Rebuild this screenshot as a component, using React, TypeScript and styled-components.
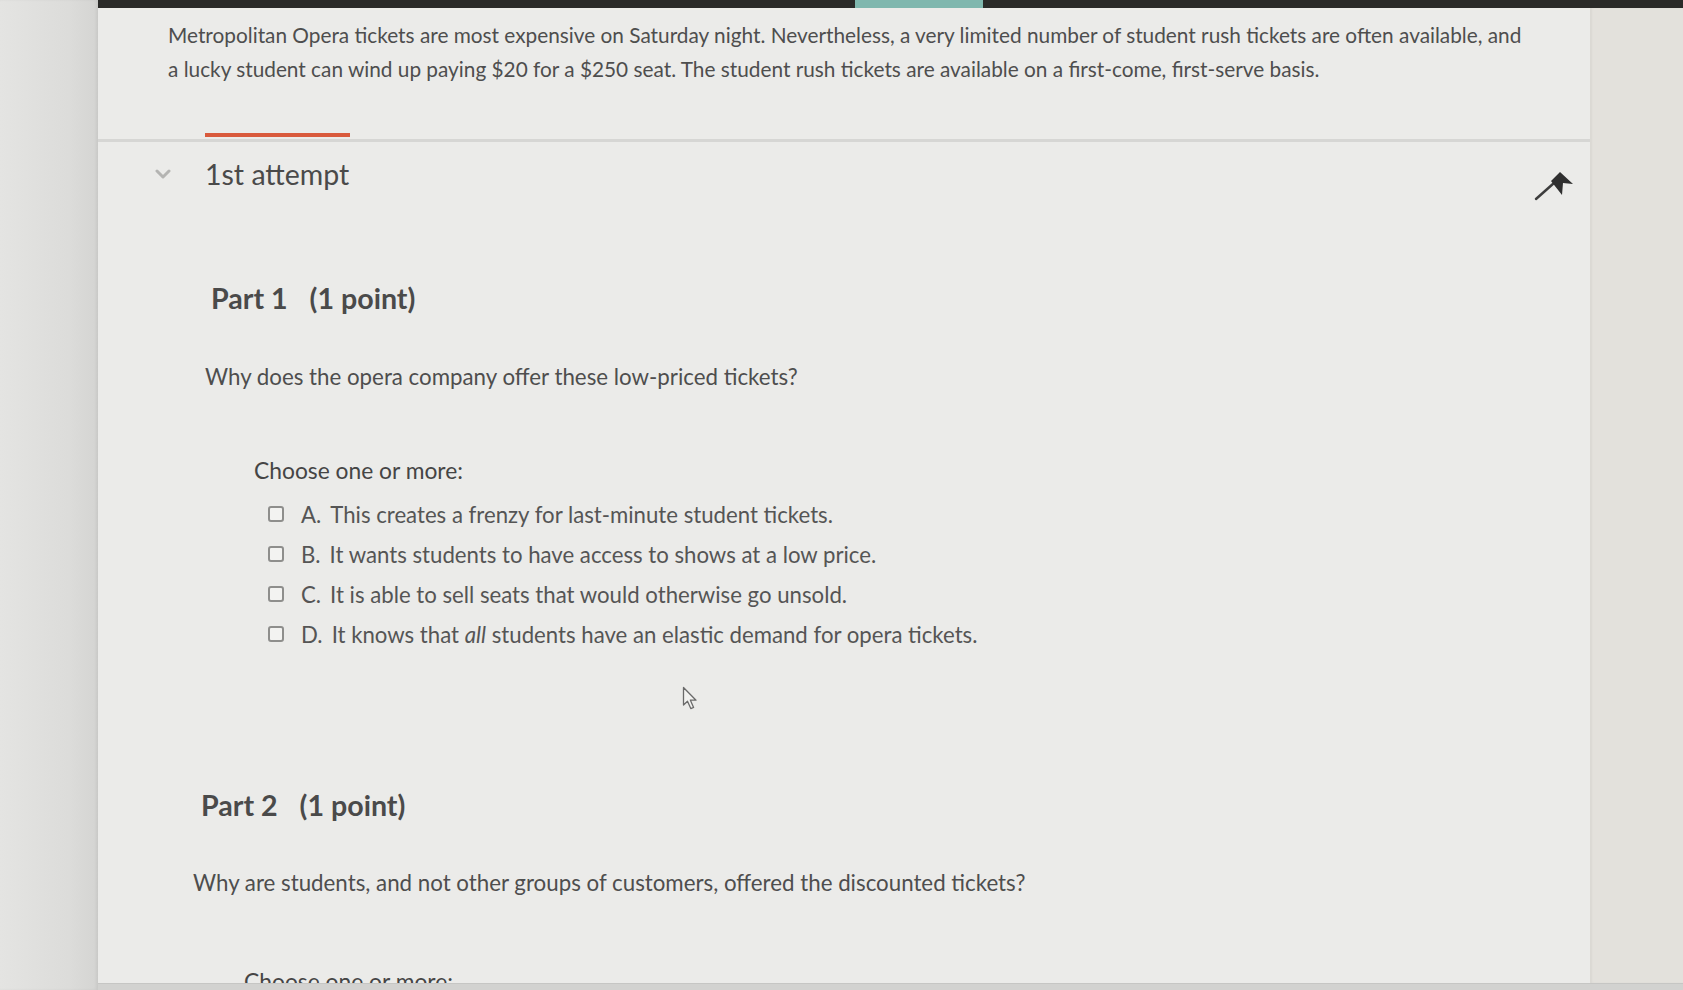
import { createGlobalStyle, styled } from 'styled-components';

const GlobalStyle = createGlobalStyle`
  html, body {
    margin: 0;
    padding: 0;
    background: #dcdcda;
  }
  body {
    font-family: 'Lato', 'Open Sans', sans-serif;
    color: #4b4b4b;
  }
`;

type Option = {
  letter: string;
  text: React.ReactNode;
};

const options: Option[] = [
  { letter: 'A.', text: 'This creates a frenzy for last-minute student tickets.' },
  { letter: 'B.', text: 'It wants students to have access to shows at a low price.' },
  { letter: 'C.', text: 'It is able to sell seats that would otherwise go unsold.' },
  {
    letter: 'D.',
    text: (
      <>
        It knows that <em>all</em> students have an elastic demand for opera tickets.
      </>
    ),
  },
];

const ChevronDown = () => (
  <svg width="16" height="12" viewBox="0 0 16 12" aria-hidden>
    <path d="M2 3 L8 9 L14 3" fill="none" stroke="#b4b4b2" strokeWidth="3" strokeLinecap="round" strokeLinejoin="round" />
  </svg>
);

const FlagArrow = () => (
  <svg width="48" height="32" viewBox="0 0 48 32" aria-hidden>
    <path d="M4 29 L22 13" stroke="#3d3d3d" strokeWidth="2.4" strokeLinecap="round" />
    <path d="M19 11 L28 2 L41 14 L31 13 L30 25 Z" fill="#2f2f2f" />
  </svg>
);

const MouseCursor = () => (
  <svg width="18" height="26" viewBox="0 0 18 26" aria-hidden>
    <path
      d="M1.5 1.5 L1.5 19 L5.5 15.2 L8.8 22.6 L11.6 21.4 L8.4 14.2 L14 14.2 Z"
      fill="#f2f2f0"
      stroke="#6a6a6a"
      strokeWidth="1.3"
      strokeLinejoin="round"
    />
  </svg>
);

export default function App() {
  return (
    <>
      <GlobalStyle />
      <Page>
        <LeftGutter />
        <Body>
          <TopBar>
            <TopTab />
          </TopBar>
          <Row>
            <Panel>
              <Intro>
                Metropolitan Opera tickets are most expensive on Saturday night. Nevertheless, a very limited
                number of student rush tickets are often available, and
                <br />a lucky student can wind up paying $20 for a $250 seat. The student rush tickets are
                available on a first-come, first-serve basis.
              </Intro>

              <TabBar>
                <ActiveTab />
              </TabBar>

              <AttemptHeader>
                <Chevron>
                  <ChevronDown />
                </Chevron>
                <AttemptTitle>1st attempt</AttemptTitle>
                <Spacer />
                <FlagButton>
                  <FlagArrow />
                </FlagButton>
              </AttemptHeader>

              <PartTitle $indent={113} $top={88}>
                Part 1<Points>(1 point)</Points>
              </PartTitle>
              <Question $indent={107} $top={46}>
                Why does the opera company offer these low-priced tickets?
              </Question>
              <Choose $indent={156} $top={63}>
                Choose one or more:
              </Choose>

              <OptionList>
                {options.map(option => (
                  <OptionRow key={option.letter}>
                    <Checkbox />
                    <Letter>{option.letter}</Letter>
                    <span>{option.text}</span>
                  </OptionRow>
                ))}
              </OptionList>

              <Cursor>
                <MouseCursor />
              </Cursor>

              <PartTitle $indent={103} $top={133}>
                Part 2<Points>(1 point)</Points>
              </PartTitle>
              <Question $indent={95} $top={45}>
                Why are students, and not other groups of customers, offered the discounted tickets?
              </Question>
              <Choose $indent={146} $top={68}>
                Choose one or more:
              </Choose>
            </Panel>
            <RightGutter />
          </Row>
          <BottomStrip />
        </Body>
      </Page>
    </>
  );
}

const Page = styled.div`
  display: flex;
  width: 1683px;
  height: 990px;
  overflow: hidden;
`;

const LeftGutter = styled.div`
  width: 98px;
  flex-shrink: 0;
  background: linear-gradient(90deg, #e4e4e2 0%, #dcdcda 70%, #d4d4d2 100%);
  box-shadow: inset -2px 0 3px rgba(0, 0, 0, 0.05);
`;

const Body = styled.div`
  flex: 1;
  display: flex;
  flex-direction: column;
  min-width: 0;
`;

const TopBar = styled.div`
  height: 8px;
  flex-shrink: 0;
  background: #2a2a28;
  display: flex;
  padding-left: 757px;
`;

const TopTab = styled.div`
  width: 128px;
  height: 100%;
  background: #7fb7ae;
`;

const Row = styled.div`
  flex: 1;
  display: flex;
  min-height: 0;
`;

const Panel = styled.main`
  position: relative;
  flex: 1;
  display: flex;
  flex-direction: column;
  overflow: hidden;
  background: #ebebe9;
`;

const RightGutter = styled.div`
  width: 93px;
  flex-shrink: 0;
  background: #e3e1dc;
  box-shadow: inset 2px 0 2px rgba(0, 0, 0, 0.04);
`;

const BottomStrip = styled.div`
  height: 6px;
  flex-shrink: 0;
  background: #d2d2d0;
  border-top: 1px solid #c6c6c4;
`;

const Intro = styled.p`
  margin: 10px 0 0;
  padding-left: 70px;
  font-size: 20.8px;
  line-height: 34px;
  color: #4e4e4e;
  white-space: nowrap;
`;

const TabBar = styled.div`
  margin-top: 47px;
  padding-left: 107px;
  display: flex;
  border-bottom: 3px solid #d6d6d4;
`;

const ActiveTab = styled.div`
  width: 145px;
  height: 4px;
  margin-bottom: 2px;
  background: #d95a3c;
`;

const AttemptHeader = styled.div`
  margin-top: 14px;
  height: 36px;
  display: flex;
  align-items: center;
  padding-left: 57px;
  padding-right: 10px;
`;

const Chevron = styled.span`
  display: flex;
  width: 50px;
`;

const AttemptTitle = styled.span`
  font-size: 28.5px;
  line-height: 36px;
  color: #4a4a4a;
`;

const Spacer = styled.span`
  flex: 1;
`;

const FlagButton = styled.span`
  display: flex;
  margin-top: 24px;
`;

const PartTitle = styled.h2<{ $indent: number; $top: number }>`
  margin: ${p => p.$top}px 0 0;
  padding-left: ${p => p.$indent}px;
  font-size: 28.6px;
  line-height: 36px;
  font-weight: 700;
  color: #4a4a4a;
`;

const Points = styled.span`
  margin-left: 22px;
`;

const Question = styled.p<{ $indent: number; $top: number }>`
  margin: ${p => p.$top}px 0 0;
  padding-left: ${p => p.$indent}px;
  font-size: 22.3px;
  line-height: 30px;
  color: #4e4e4e;
`;

const Choose = styled.p<{ $indent: number; $top: number }>`
  margin: ${p => p.$top}px 0 0;
  padding-left: ${p => p.$indent}px;
  font-size: 22.8px;
  line-height: 30px;
  color: #454545;
`;

const OptionList = styled.div`
  margin-top: 9px;
  padding-left: 170px;
  display: flex;
  flex-direction: column;
`;

const OptionRow = styled.label`
  display: flex;
  align-items: center;
  height: 40px;
  font-size: 22.2px;
  color: #555;
`;

const Checkbox = styled.span`
  width: 12px;
  height: 12px;
  border: 2px solid #8e8e8c;
  border-radius: 3px;
  background: #f3f3f1;
  margin-right: 17px;
  flex-shrink: 0;
`;

const Letter = styled.span`
  margin-right: 9px;
`;

const Cursor = styled.span`
  position: absolute;
  left: 584px;
  top: 678px;
  display: flex;
`;
